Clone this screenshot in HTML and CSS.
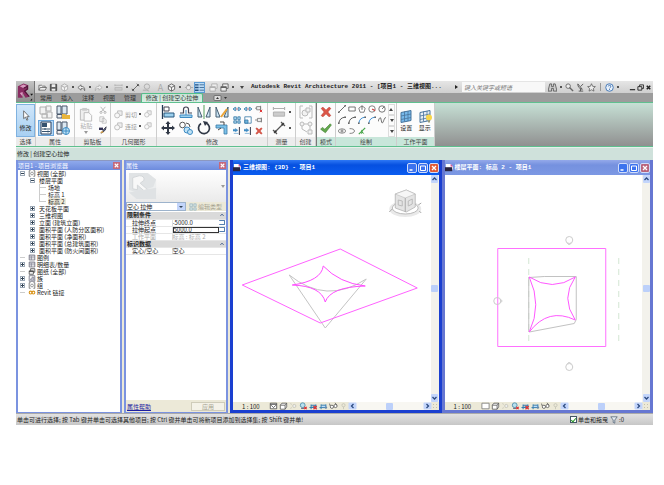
FILE: index.html
```html
<!DOCTYPE html>
<html lang="zh-CN">
<head>
<meta charset="utf-8">
<title>Autodesk Revit Architecture 2011</title>
<link rel="stylesheet" href="styles.css">
</head>
<body>
<svg class="sprite" aria-hidden="true">
  <symbol id="open" viewBox="0 0 10 10"><path d="M1 8V2.500h3l1 1h3V5M1 8l1.500-3H9.500L8 8z" fill="#eee" stroke="#555" stroke-width=".8"/></symbol>
  <symbol id="save" viewBox="0 0 10 10"><path d="M1.500 1.500h7v7h-7z" fill="#666" stroke="#444"/><path d="M3 1.500h4v3H3zM3 6.500h4v2H3z" fill="#eee"/></symbol>
  <symbol id="cube" viewBox="0 0 10 10"><path d="M5 1l3.500 2v4L5 9 1.500 7V3zM1.500 3L5 5l3.500-2M5 5v4" fill="#f2f2f2" stroke="currentColor" stroke-width=".9"/></symbol>
  <symbol id="undo" viewBox="0 0 10 10"><path d="M1 5l3.500-3v1.800C8 3.800 9 5.500 8.500 8.500 8 6.500 7 6 4.500 6.200V8z" fill="#eee" stroke="currentColor" stroke-width=".8"/></symbol>
  <symbol id="measure" viewBox="0 0 10 10"><path d="M1 2.500h8M1 1.500v2m8-2v2" fill="none" stroke="currentColor" stroke-width=".8"/><path d="M1 5h8v3H1z" fill="#ccc" stroke="#aaa" stroke-width=".6"/></symbol>
  <symbol id="dim" viewBox="0 0 14 14"><path d="M2 12L12 2M1 9l4 4M9 1l4 4" fill="none" stroke="#555" stroke-width="1.200"/><path d="M2 12l1-3 2 2zM12 2l-1 3-2-2z" fill="#333"/></symbol>
  <symbol id="tagr" viewBox="0 0 10 10"><circle cx="5.500" cy="4" r="3" fill="none" stroke="#aaa"/><path d="M1 8h4l3 1" fill="none" stroke="#aaa"/></symbol>
  <symbol id="section" viewBox="0 0 10 10"><circle cx="5" cy="5" r="2.500" fill="#eee" stroke="#aaa"/><path d="M5 1l1.500 2h-3zM1 5h2m4 0h3" fill="#999" stroke="#999" stroke-width=".7"/></symbol>
  <symbol id="thin" viewBox="0 0 10 10"><path d="M0 2h4M0 5h4M0 8h4" stroke="#234f80" stroke-width="1.500"/><path d="M5 2h5M5 5h5M5 8h5" stroke="#234f80" stroke-width=".8"/></symbol>
  <symbol id="wins" viewBox="0 0 10 10"><path d="M1 4h6v5H1zM3 4V1h6v5H7" fill="#eee" stroke="currentColor" stroke-width=".9"/><path d="M1 5h6" stroke="currentColor"/></symbol>
  <symbol id="props" viewBox="0 0 14 14"><path d="M1 2h6v7H1zM7 1h5v5H7zM3 9h5v4H3zM8 7h5v6H8z" fill="#f2f2f2" stroke="currentColor"/></symbol>
  <symbol id="typep" viewBox="0 0 14 14"><path d="M1 1h4v8H1zM6 1h5v8H6z" fill="#dce8f2" stroke="#48576a"/><path d="M1 9.500h5V13H1z" fill="#eee" stroke="#48576a"/></symbol>
  <symbol id="pal" viewBox="0 0 14 14"><path d="M2 1h10v12H2z" fill="#fff" stroke="#263d5a"/><path d="M3 2h5v4H3z" fill="#35526f"/><path d="M3 8h8M3 10.500h8M6 7v2m3 .5v2" stroke="#35526f"/></symbol>
  <symbol id="paste" viewBox="0 0 14 16"><path d="M1 2.500h9V14H1z" fill="#eee" stroke="#bbb"/><path d="M3 1h5v3H3z" fill="#ccc"/><path d="M5 6h5l3 3v6H5z" fill="#fafafa" stroke="#bbb"/></symbol>
  <symbol id="cut" viewBox="0 0 10 10"><path d="M2 1l5 6M8 1L3 7" stroke="#aaa"/><circle cx="2.500" cy="8" r="1.300" fill="none" stroke="#aaa"/><circle cx="7.500" cy="8" r="1.300" fill="none" stroke="#aaa"/></symbol>
  <symbol id="copy" viewBox="0 0 10 10"><path d="M1 1h5v6H1zM4 3h3l2 2v4H4z" fill="#f7f7f7" stroke="#bbb"/></symbol>
  <symbol id="brush" viewBox="0 0 10 10"><path d="M0 2h5v3H0z" fill="#335"/><path d="M3 9l3-5 3-3-1 4z" fill="#5a6b89" stroke="#334"/><path d="M1 9l3-3 2 2z" fill="#d5a34e"/></symbol>
  <symbol id="geo" viewBox="0 0 10 10"><path d="M4 1h5v5H4z" fill="#eee" stroke="#bbb"/><circle cx="3.500" cy="6" r="2.800" fill="#f8f8f8" stroke="#bbb"/></symbol>
  <symbol id="align" viewBox="0 0 14 14"><path d="M1.500 0v14" stroke="#223a55" stroke-width="1.300"/><path d="M3 2h5v4H3z" fill="#fff" stroke="#445"/><path d="M3 8h10v4H3z" fill="#9bd0ee" stroke="#28597e"/></symbol>
  <symbol id="offset" viewBox="0 0 14 14"><path d="M1 8h3.500V4.500a2.500 2.500 0 0 1 5 0V8H13" fill="none" stroke="#445" stroke-width="1.200"/><path d="M1 10h12v2.500H1z" fill="#9bd0ee" stroke="#3f8cc4"/><path d="M7 5v5" stroke="#3f8cc4"/></symbol>
  <symbol id="mirror" viewBox="0 0 14 14"><path d="M1 12V2l4 10zM13 12V2L9 12z" fill="#cce6f6" stroke="#445c70"/><path d="M7 0v14" stroke="#55a05a"/></symbol>
  <symbol id="mirror2" viewBox="0 0 14 14"><path d="M1 12V2l4 10zM13 12V2L9 12z" fill="#cce6f6" stroke="#445c70"/><path d="M6 12l6-8" stroke="#eaa437" stroke-width="2"/></symbol>
  <symbol id="move" viewBox="0 0 14 14"><path d="M7 0l2.500 3H8v3h3V4.500L14 7l-3 2.500V8H8v3h1.500L7 14l-2.500-3H6V8H3v1.500L0 7l3-2.500V6h3V3H4.500z" fill="#303846"/></symbol>
  <symbol id="copym" viewBox="0 0 14 14"><circle cx="3.500" cy="4" r="2.800" fill="#fff" stroke="#555"/><circle cx="8" cy="9" r="3" fill="#bfe2f5" stroke="#3f8cc4"/><circle cx="11" cy="11" r="2.500" fill="#bfe2f5" stroke="#3f8cc4"/><path d="M7 2q4 0 4 4" fill="none" stroke="#555"/></symbol>
  <symbol id="rotate" viewBox="0 0 14 14"><path d="M4 2.500A5.500 5.500 0 1 0 9 2" fill="none" stroke="#303846" stroke-width="1.700"/><path d="M6 0l5 1-3 4z" fill="#303846"/></symbol>
  <symbol id="trim" viewBox="0 0 14 14"><path d="M1 4h11v9H9V7H1z" fill="#7cc1e8" stroke="#3779a6" stroke-width=".8"/><path d="M5 1h4v3M3 9l3-2" fill="none" stroke="#444"/></symbol>
  <symbol id="split" viewBox="0 0 10 10"><path d="M0 5l2.500-2h1v4h-1zM10 5L7.500 3h-1v4h1z" fill="#9bd0ee" stroke="#3779a6"/><path d="M4 5h2" stroke="#d44"/></symbol>
  <symbol id="pin" viewBox="0 0 10 10"><path d="M2 2h5v4H2zM0 4h2M7 1v6" fill="#eee" stroke="#777"/><path d="M6 6l3 3m0-3L6 9" stroke="#d33" stroke-width="1.200"/></symbol>
  <symbol id="pin2" viewBox="0 0 10 10"><path d="M3 3h5v4H3zM0 5h3M8 2v6" fill="#eee" stroke="#777"/></symbol>
  <symbol id="array" viewBox="0 0 10 10"><path d="M1 1h3.500v3.500H1zM6 1h3v3.500H6zM1 6h3.500v3H1zM6 6h3v3H6z" fill="#a9d6ef" stroke="#3779a6"/></symbol>
  <symbol id="scale" viewBox="0 0 10 10"><path d="M1 1h8v8H1z" fill="#fff" stroke="#3779a6"/><path d="M1 5h4v4H1z" fill="#73b8df" stroke="#3779a6"/></symbol>
  <symbol id="extend" viewBox="0 0 10 10"><path d="M8 0v10" stroke="#334" stroke-width="1.200"/><path d="M0 3h3v-1l3 2-3 2V5H0zM1 8h6" fill="#3f8cc4" stroke="#3f8cc4" stroke-width=".7"/></symbol>
  <symbol id="x" viewBox="0 0 10 10"><path d="M1 2l1.500-1L5 3.500 7.500 1 9 2 6.500 5 9 8 7.500 9 5 6.500 2.500 9 1 8l2.500-3z" fill="#dc5648" stroke="#bb372c" stroke-width=".5"/></symbol>
  <symbol id="check" viewBox="0 0 10 10"><path d="M.5 6L2 4.500 4 6 8.500 1.500l1 1L4.500 9z" fill="#62a84d" stroke="#417e32" stroke-width=".5"/></symbol>
  <symbol id="create" viewBox="0 0 14 14"><path d="M4 1H1v12h3M10 1h3v12h-3" fill="none" stroke="#bbb"/><circle cx="6" cy="8" r="3" fill="#f2f2f2" stroke="#bbb"/><path d="M7 3h4v4H7z" fill="#f2f2f2" stroke="#bbb"/></symbol>
  <symbol id="create2" viewBox="0 0 14 14"><path d="M3 5v3l5 3M5 3h4M11 5v4" fill="none" stroke="#bbb"/><circle cx="3" cy="3" r="2" fill="#f2f2f2" stroke="#bbb"/><circle cx="11" cy="3" r="2" fill="#f2f2f2" stroke="#bbb"/><path d="M9 9h4v4H9z" fill="#f2f2f2" stroke="#bbb"/></symbol>
  <symbol id="line" viewBox="0 0 10 10"><path d="M1 9l8-8" stroke="#444"/><path d="M0 8h2v2H0zM8 0h2v2H8z" fill="#666"/></symbol>
  <symbol id="rect" viewBox="0 0 10 10"><path d="M1 2.500h8v5H1z" fill="#fff" stroke="#555"/></symbol>
  <symbol id="poly" viewBox="0 0 10 10"><path d="M5 1l4 3-1.500 5h-5L1 4z" fill="#fff" stroke="#666"/><path d="M5 1v5" stroke="#444"/></symbol>
  <symbol id="poly2" viewBox="0 0 10 10"><circle cx="5" cy="5" r="4" fill="#fff" stroke="#666"/><path d="M5 5l4 2" stroke="#c44" stroke-width="1.500"/></symbol>
  <symbol id="circ" viewBox="0 0 10 10"><circle cx="5" cy="5" r="4" fill="#fff" stroke="#555"/><path d="M5 5l3-3" stroke="#555"/></symbol>
  <symbol id="arc" viewBox="0 0 10 10"><path d="M1 9Q2 2 9 1.500" fill="none" stroke="currentColor" stroke-width="1.200"/><path d="M0 8h2v2H0zM8 .5h2v2H8z" fill="#666"/></symbol>
  <symbol id="spline" viewBox="0 0 10 10"><path d="M0 7Q3-2 4 5t3 1 3-3" fill="none" stroke="#555"/></symbol>
  <symbol id="ell" viewBox="0 0 10 10"><ellipse cx="5" cy="5" rx="4.500" ry="2.700" fill="#fff" stroke="#666"/><path d="M5 3v4M3 5h4" stroke="#666"/></symbol>
  <symbol id="pell" viewBox="0 0 10 10"><path d="M2 2q6 0 6 3t-6 3" fill="none" stroke="#666"/></symbol>
  <symbol id="pick" viewBox="0 0 10 10"><path d="M1 9L9 1" stroke="#46a548" stroke-width="1.500"/><path d="M4 3v6l1.500-1.500L8 9z" fill="#46a548"/></symbol>
  <symbol id="grid" viewBox="0 0 14 14"><path d="M2 3l10-2v10L2 13z" fill="currentColor" stroke="#47749c"/><path d="M2 6.500l10-2M2 10l10-2M5.500 2v10M9 1.500v10" stroke="#47749c" stroke-width=".8"/></symbol>
  <symbol id="view" viewBox="0 0 10 10"><path d="M3 1H1v8h2M7 1h2v8H7" fill="none" stroke="#555"/><circle cx="5" cy="5" r="2" fill="none" stroke="#777"/></symbol>
  <symbol id="sheet" viewBox="0 0 10 10"><path d="M1 1.500h8v7H1z" fill="#fff" stroke="#556"/><path d="M1 3h8M4 3v5.500M1 5.500h8" stroke="#778"/></symbol>
  <symbol id="fam" viewBox="0 0 10 10"><path d="M1 1h8v8H1z" fill="#fff" stroke="#556"/><path d="M3 5.500h2V3h2.500v4.500H3z" fill="#ccd" stroke="#667" stroke-width=".8"/></symbol>
  <symbol id="link" viewBox="0 0 10 10"><circle cx="3" cy="5" r="2" fill="none" stroke="#d99318" stroke-width="1.500"/><circle cx="7" cy="5" r="2" fill="none" stroke="#d99318" stroke-width="1.500"/></symbol>
  <symbol id="detail" viewBox="0 0 10 10"><path d="M1 1.500h8v7H1z" fill="#fff" stroke="#444"/><path d="M1 3h8M2 4l3 3 3-3" fill="none" stroke="#444"/></symbol>
  <symbol id="box" viewBox="0 0 10 10"><path d="M.5 1.500h9v7h-9z" fill="#fff" stroke="#777"/></symbol>
  <symbol id="solid" viewBox="0 0 10 10"><path d="M1 4l2-2.500h6V6L7 9H1zM1 4h6v5M7 4l2-2.500" fill="#fff" stroke="#555"/></symbol>
  <symbol id="sun" viewBox="0 0 10 10"><circle cx="6" cy="5" r="2" fill="#eee" stroke="#c3c3b5"/><path d="M1 2l2 1M1 8l2-1" stroke="#c3c3b5"/></symbol>
  <symbol id="shade" viewBox="0 0 10 10"><circle cx="4" cy="4" r="3" fill="#b8e0ee" stroke="#4488a8"/><path d="M2 8h4" stroke="#446"/><path d="M6 6l3 3m0-3L6 9" stroke="#d33" stroke-width="1.500"/></symbol>
  <symbol id="crop" viewBox="0 0 10 10"><path d="M0 7h8V3M2 3v6M2 4h6" fill="#9cd" stroke="#357db0" stroke-width="1.300"/><path d="M5 5l4 4m0-4L5 9" stroke="#d33" stroke-width="1.600"/></symbol>
  <symbol id="crop2" viewBox="0 0 10 10"><path d="M0 7h8V3M2 3v6M2 4h6" fill="#bdf" stroke="#357db0" stroke-width="1.200"/><circle cx="8" cy="7" r="1.500" fill="#68a"/></symbol>
  <symbol id="glasses" viewBox="0 0 10 10"><circle cx="3" cy="6" r="2" fill="#fff" stroke="#555"/><circle cx="7.500" cy="5" r="2" fill="#fff" stroke="#555"/><path d="M1 5L0 2M9 4l-2-3" stroke="#555"/></symbol>
  <symbol id="bulb" viewBox="0 0 10 10"><circle cx="5" cy="4" r="2" fill="none" stroke="#c3c3b5"/><path d="M5 6v3" stroke="#c3c3b5"/></symbol>
  <symbol id="doc" viewBox="0 0 10 10"><path d="M1 0h6l3 3v4H1z" fill="#fff"/><path d="M0 4h9v5H0z" fill="#2a2440"/><path d="M7 0l3 3H7z" fill="#d48"/></symbol>
  <symbol id="binoc" viewBox="0 0 10 10"><path d="M2 1h2v3h2V1h2l2 8H6V6H4v3H0z" fill="#ccc" stroke="#444" stroke-width=".8"/></symbol>
  <symbol id="key" viewBox="0 0 10 10"><circle cx="3.500" cy="3.500" r="2.500" fill="#eee" stroke="#666"/><path d="M5 5l4 4" stroke="#666" stroke-width="1.500"/></symbol>
  <symbol id="dish" viewBox="0 0 10 10"><path d="M2 1q0 5 5 6zM3 9h5M5 6v3M5 4l3-3" fill="#eee" stroke="#555"/></symbol>
  <symbol id="star" viewBox="0 0 10 10"><path d="M5 .8l1.300 2.900 3 .3-2.200 2 .6 3L5 7.500 2.300 9l.6-3L.7 4l3-.3z" fill="#eee" stroke="#555" stroke-width=".8"/></symbol>
  <symbol id="help" viewBox="0 0 10 10"><circle cx="5" cy="5" r="4.200" fill="#e8f1fb" stroke="#3c73b4"/><path d="M3.700 3.800q.2-1.300 1.400-1.300T6.400 3.700 5 5.800M5 6.800v1" fill="none" stroke="#2a5ea0" stroke-width=".9"/></symbol>
  <symbol id="up" viewBox="0 0 7 8"><path d="M1.500 5L3.500 3l2 2" fill="none" stroke="#2c4a80" stroke-width="1.300"/></symbol>
</svg>

<div class="app">
  <header class="head">
    <button class="logo" aria-label="应用程序菜单">
      <svg viewBox="0 0 19 21"><path d="M2 17V5l6-3 5 2v4l-3 2 4 6-4 1-3-5v5z" fill="#8a2d62"/><path d="M4 5l4-2 4 2-4 2zM4 12l3-1v5z" fill="#d99ac0"/><path d="M8 7l4-2v3l-3 2 5 6" fill="none" stroke="#4e1437" stroke-width="1.200"/><path d="M15 13h3l-1.500 2z" fill="#111"/><path d="M15 20l2-2v2z" fill="#111"/></svg>
    </button>
    <div class="headmain">
      <div class="titlebar">
        <button class="q" aria-label="打开"><svg><use href="#open"/></svg></button>
        <button class="q" aria-label="保存"><svg><use href="#save"/></svg></button>
        <button class="q off" aria-label="同步"><svg><use href="#cube"/></svg></button><i class="dot"></i>
        <button class="q" aria-label="放弃"><svg><use href="#undo"/></svg></button><i class="dot"></i>
        <button class="q off flip" aria-label="重做"><svg><use href="#undo"/></svg></button><i class="dot"></i><i class="sp"></i>
        <button class="q off" aria-label="测量"><svg><use href="#measure"/></svg></button><i class="dot"></i>
        <button class="q" aria-label="对齐尺寸标注"><svg><use href="#dim"/></svg></button>
        <button class="q" aria-label="标记"><svg><use href="#tagr"/></svg></button><i class="sp"></i>
        <button class="q off" aria-label="文字">A</button>
        <button class="q" aria-label="三维视图"><svg><use href="#cube"/></svg></button><i class="dot"></i>
        <button class="q" aria-label="剖面"><svg><use href="#section"/></svg></button>
        <button class="q on" aria-label="细线"><svg><use href="#thin"/></svg></button><i class="sp"></i>
        <button class="q off" aria-label="关闭隐藏窗口"><svg><use href="#wins"/></svg></button>
        <button class="q" aria-label="切换窗口"><svg><use href="#wins"/></svg></button><i class="dot"></i>
        <button class="q" aria-label="自定义"><i class="tri"></i></button>
        <h1 class="apptitle">Autodesk Revit Architecture 2011 - [项目1 - 三维视图...</h1>
        <i class="tri side"></i>
        <input class="search" type="text" aria-label="搜索" placeholder="键入关键字或短语">
        <button class="q" aria-label="查找"><svg><use href="#binoc"/></svg></button><i class="dot"></i>
        <button class="q" aria-label="速博中心"><svg><use href="#key"/></svg></button>
        <button class="q" aria-label="通讯中心"><svg><use href="#dish"/></svg></button>
        <button class="q" aria-label="收藏夹"><svg><use href="#star"/></svg></button>
        <i class="bar"></i>
        <button class="q" aria-label="帮助"><svg><use href="#help"/></svg></button><i class="dot"></i>
        <span class="winbtns">
          <button aria-label="最小化"><svg viewBox="0 0 8 8"><path d="M1 6.500h6" stroke="#222" stroke-width="1.300"/></svg></button>
          <button aria-label="还原"><svg viewBox="0 0 8 8"><path d="M1 3h4.500v4H1zM3 3V1h4.500v4h-2" fill="none" stroke="#222"/></svg></button>
          <button aria-label="关闭"><svg viewBox="0 0 8 8"><path d="M2 2l4 4M6 2L2 6" stroke="#222" stroke-width="1.700"/></svg></button>
        </span>
      </div>
      <nav class="tabs">
        <a href="#">常用</a><a href="#">插入</a><a href="#">注释</a><a href="#">视图</a><a href="#">管理</a><a href="#" class="active">修改 | 创建空心拉伸</a>
        <button class="ribtoggle" aria-label="最小化功能区"><svg viewBox="0 0 14 6"><rect x="1" y=".5" width="7" height="5" rx="1" fill="#ddd" stroke="#555" stroke-width=".7"/><path d="M3 4l1.500-2L6 4zM11 2h3l-1.500 2z" fill="#333"/></svg></button>
      </nav>
    </div>
  </header>

  <div class="ribbon">
    <section class="panel p-sel"><div class="body"><button class="modify"><svg viewBox="0 0 10 14"><path d="M2 1v10l2.500-2L6 13l1.500-.7L6 8.500h3z" fill="#fff" stroke="#555"/></svg>修改</button></div><h2>选择</h2></section>
    <section class="panel p-prop"><div class="body g2">
      <button class="b off" aria-label="族类别"><svg><use href="#props"/></svg></button>
      <button class="b" aria-label="族类型"><svg viewBox="0 0 14 14"><use href="#typep"/><path d="M6 9h3l1 1h4v4H6z" fill="#e9b53c"/></svg></button>
      <button class="b on" aria-label="属性"><svg><use href="#pal"/></svg></button>
      <button class="b" aria-label="类型属性"><svg viewBox="0 0 14 14"><use href="#typep"/><circle cx="10" cy="10" r="3.500" fill="#bfe2f5" stroke="#3f8cc4"/><path d="M6.500 10h7M10 6.500v7" stroke="#3f8cc4"/></svg></button>
    </div><h2>属性</h2></section>
    <section class="panel p-clip"><div class="body clip">
      <button class="big off"><svg><use href="#paste"/></svg>粘贴<i class="tri"></i></button>
      <div class="col"><button class="s" aria-label="剪切到剪贴板"><svg><use href="#cut"/></svg></button><button class="s" aria-label="复制到剪贴板"><svg><use href="#copy"/></svg></button><button class="s" aria-label="匹配类型"><svg><use href="#brush"/></svg></button></div>
    </div><h2>剪贴板</h2></section>
    <section class="panel p-geo"><div class="body rows">
      <div class="row"><button class="cmd"><svg><use href="#geo"/></svg>剪切</button><i class="dot"></i><button class="s" aria-label="拆分面"><svg><use href="#geo"/></svg></button></div>
      <div class="row"><button class="cmd"><svg><use href="#geo"/></svg>连接</button><i class="dot"></i><button class="s" aria-label="填色"><svg><use href="#geo"/></svg></button></div>
    </div><h2>几何图形</h2></section>
    <section class="panel p-mod"><div class="body mod">
      <div class="g4">
        <button class="b" aria-label="对齐"><svg><use href="#align"/></svg></button><button class="b" aria-label="偏移"><svg><use href="#offset"/></svg></button><button class="b" aria-label="镜像拾取轴"><svg><use href="#mirror"/></svg></button><button class="b" aria-label="镜像绘制轴"><svg><use href="#mirror2"/></svg></button>
        <button class="b" aria-label="移动"><svg><use href="#move"/></svg></button><button class="b" aria-label="复制"><svg><use href="#copym"/></svg></button><button class="b" aria-label="旋转"><svg><use href="#rotate"/></svg></button><button class="b" aria-label="修剪"><svg><use href="#trim"/></svg></button>
      </div>
      <div class="g3">
        <button class="s" aria-label="拆分图元"><svg><use href="#split"/></svg></button><button class="s" aria-label="间隙拆分"><svg><use href="#split"/></svg></button><button class="s" aria-label="解锁"><svg><use href="#pin"/></svg></button>
        <button class="s" aria-label="阵列"><svg><use href="#array"/></svg></button><button class="s" aria-label="缩放"><svg><use href="#scale"/></svg></button><button class="s" aria-label="锁定"><svg><use href="#pin2"/></svg></button>
        <button class="s" aria-label="修剪单个"><svg><use href="#extend"/></svg></button><button class="s" aria-label="修剪多个"><svg><use href="#extend"/></svg></button><button class="s" aria-label="删除"><svg><use href="#x"/></svg></button>
      </div>
    </div><h2>修改</h2></section>
    <section class="panel p-mea"><div class="body rows">
      <div class="row"><button class="b off" aria-label="测量距离"><svg><use href="#measure"/></svg></button><i class="dot"></i></div>
      <div class="row"><button class="b" aria-label="尺寸标注"><svg><use href="#dim"/></svg></button><i class="dot"></i></div>
    </div><h2>测量</h2></section>
    <section class="panel p-one"><div class="body rows"><button class="b" aria-label="创建组"><svg><use href="#create"/></svg></button><button class="b" aria-label="创建类似"><svg><use href="#create2"/></svg></button></div><h2>创建</h2></section>
    <section class="panel ctx p-one first"><div class="body rows"><button class="b mid" aria-label="取消"><svg><use href="#x"/></svg></button><button class="b mid" aria-label="完成"><svg><use href="#check"/></svg></button></div><h2>模式</h2></section>
    <section class="panel ctx p-draw"><div class="body mod">
      <div class="g5">
        <button class="s" aria-label="直线"><svg><use href="#line"/></svg></button><button class="s" aria-label="矩形"><svg><use href="#rect"/></svg></button><button class="s" aria-label="内接多边形"><svg><use href="#poly"/></svg></button><button class="s" aria-label="外接多边形"><svg><use href="#poly2"/></svg></button><button class="s" aria-label="圆形"><svg><use href="#circ"/></svg></button>
        <button class="s" aria-label="起点终点弧"><svg><use href="#arc"/></svg></button><button class="s" aria-label="圆心弧"><svg><use href="#arc"/></svg></button><button class="s blue" aria-label="相切弧"><svg><use href="#arc"/></svg></button><button class="s blue" aria-label="圆角弧"><svg><use href="#arc"/></svg></button><button class="s" aria-label="样条曲线"><svg><use href="#spline"/></svg></button>
        <button class="s" aria-label="椭圆"><svg><use href="#ell"/></svg></button><button class="s" aria-label="半椭圆"><svg><use href="#pell"/></svg></button><button class="s" aria-label="拾取线"><svg><use href="#pick"/></svg></button>
      </div>
      <div class="gal"><button class="dn" aria-label="上"><i class="tri"></i></button><button aria-label="下"><i class="tri"></i></button><button aria-label="更多"><i class="tri"></i></button></div>
    </div><h2>绘制</h2></section>
    <section class="panel ctx p-wp"><div class="body wp">
      <button class="big"><svg class="blue2"><use href="#grid"/></svg>设置</button>
      <button class="big"><svg class="pale" viewBox="0 0 14 14"><use href="#grid"/><circle cx="11" cy="8" r="3" fill="#f7d64a"/><path d="M10 11h2v2h-2z" fill="#997"/></svg>显示</button>
    </div><h2>工作平面</h2></section>
  </div>

  <div class="options">修改 | 创建空心拉伸</div>

  <main class="work">
    <aside class="dock browser">
      <div class="docktitle"><span>项目1 - 项目浏览器</span><button class="close" aria-label="关闭"><svg viewBox="0 0 8 8"><path d="M2 2l4 4M6 2L2 6" stroke="#fff" stroke-width="1.300"/></svg></button></div>
      <ul class="tree">
        <li><div><i class="ex"></i><svg><use href="#view"/></svg>视图 (全部)</div>
          <ul>
            <li><div><i class="ex"></i>楼层平面</div>
              <ul><li><div>场地</div></li><li><div>标高 1</div></li><li><div><b>标高 2</b></div></li></ul></li>
            <li><div><i class="ex plus"></i>天花板平面</div></li>
            <li><div><i class="ex plus"></i>三维视图</div></li>
            <li><div><i class="ex plus"></i>立面 (建筑立面)</div></li>
            <li><div><i class="ex plus"></i>面积平面 (人防分区面积)</div></li>
            <li><div><i class="ex plus"></i>面积平面 (净面积)</div></li>
            <li><div><i class="ex plus"></i>面积平面 (总建筑面积)</div></li>
            <li><div><i class="ex plus"></i>面积平面 (防火间面积)</div></li>
          </ul></li>
        <li><div><i class="ex none"></i><svg><use href="#sheet"/></svg>图例</div></li>
        <li><div><i class="ex plus"></i><svg><use href="#sheet"/></svg>明细表/数量</div></li>
        <li><div><i class="ex none"></i><svg><use href="#wins"/></svg>图纸 (全部)</div></li>
        <li><div><i class="ex plus"></i><svg><use href="#fam"/></svg>族</div></li>
        <li><div><i class="ex plus"></i><svg><use href="#view"/></svg>组</div></li>
        <li><div><i class="ex none"></i><svg><use href="#link"/></svg>Revit 链接</div></li>
      </ul>
    </aside>

    <aside class="dock props">
      <div class="docktitle"><span>属性</span><button class="close" aria-label="关闭"><svg viewBox="0 0 8 8"><path d="M2 2l4 4M6 2L2 6" stroke="#fff" stroke-width="1.300"/></svg></button></div>
      <div class="preview">
        <svg viewBox="0 0 32 30"><path d="M1 1h20l9 7v21H9L1 22z" fill="#eceeef"/><path d="M1 1h20l9 7-3 8-18 6-8-3z" fill="#e0e3e5"/><path d="M5 18V6l7-2q6 0 5 5l-4 3 8 7-4 1-7-6v5z" fill="#f8f8f8" stroke="#d2d5d7"/><path d="M1 22l29-5v12H9z" fill="#dfe2e4"/></svg>
        <i class="tri"></i>
      </div>
      <div class="typerow">
        <label class="selwrap"><select aria-label="类型选择器"><option>空心 拉伸</option></select><span class="chev"></span></label>
        <button class="edit" disabled><svg><use href="#array"/></svg>编辑类型</button>
      </div>
      <table>
        <colgroup><col class="c1"><col><col class="c3"></colgroup>
        <tbody>
          <tr><th colspan="3"><div class="grp">限制条件<svg><use href="#up"/></svg></div></th></tr>
          <tr><td><label for="end">拉伸终点</label></td><td><input id="end" type="text" value="-5000.0"></td><td><button class="assoc" aria-label="关联参数"></button></td></tr>
          <tr><td><label for="start">拉伸起点</label></td><td><input id="start" class="focus" type="text" value="5000.0"></td><td><button class="assoc" aria-label="关联参数"></button></td></tr>
          <tr class="dis"><td>工作平面</td><td>标高 : 标高 2</td><td></td></tr>
          <tr><th colspan="3"><div class="grp">标识数据<svg><use href="#up"/></svg></div></th></tr>
          <tr><td>实心/空心</td><td>空心</td><td></td></tr>
        </tbody>
      </table>
      <div class="propfoot"><a href="#">属性帮助</a><button disabled>应用</button></div>
    </aside>

    <div class="mdi">
      <section class="win front">
        <div class="wintitle"><svg><use href="#doc"/></svg><span>三维视图: {3D} - 项目1</span>
          <button aria-label="最小化"><svg viewBox="0 0 8 8"><path d="M1.500 6h3" stroke="#fff" stroke-width="1.500"/></svg></button><button aria-label="最大化"><svg viewBox="0 0 8 8"><path d="M1.500 2h5v4.500h-5z" fill="none" stroke="#fff"/></svg></button><button class="wx" aria-label="关闭"><svg viewBox="0 0 8 8"><path d="M2 2l4 4M6 2L2 6" stroke="#fff" stroke-width="1.300"/></svg></button></div>
        <div class="client">
          <svg class="canvas" viewBox="0 0 197 227" preserveAspectRatio="xMidYMin meet">
            <g fill="none">
              <path d="M56 100Q93 130 133 104L92 153z" stroke="#c4c4c4"/>
              <path d="M107 74L9 110 87 148 184 113z" stroke="#ff62ff"/>
              <path d="M90 91Q88 106 59 110Q88 111 92 127Q97 112 132 111Q106 108 90 91z" stroke="#ff4cff"/>
            </g>
            <ellipse cx="172" cy="34" rx="16" ry="8" fill="#e9e9e9"/>
            <ellipse cx="172" cy="33" rx="13" ry="6" fill="#fff" stroke="#bbb"/>
            <path d="M162 19l11-4 9 4v13l-9 5-11-4z" fill="#e4e4e4" stroke="#aaa" stroke-width=".7"/>
            <path d="M162 19l11-4 9 4-10 4z" fill="#f6f6f6" stroke="#bbb" stroke-width=".6"/>
            <path d="M172 23v14" stroke="#aaa"/><path d="M165 25l4 1v5l-4-1zM175 26l4-2v5l-4 2z" fill="none" stroke="#bbb"/>
            <path d="M156 37l3-3M185 30l3-2M186 36l2 2" stroke="#aaa"/>
          </svg>
          <div class="vs"><button aria-label="向上"><svg><use href="#up"/></svg></button><i></i><button class="dn" aria-label="向下"><svg><use href="#up"/></svg></button></div>
        </div>
        <div class="vbar"><span class="scale">1 : 100</span>
          <svg><use href="#detail"/></svg><svg><use href="#solid"/></svg><svg><use href="#sun"/></svg><svg><use href="#shade"/></svg><svg><use href="#crop"/></svg><svg><use href="#crop2"/></svg><svg><use href="#glasses"/></svg><svg><use href="#bulb"/></svg>
          <div class="hs"><button class="lf" aria-label="向左"><svg><use href="#up"/></svg></button><i></i><button class="rt" aria-label="向右"><svg><use href="#up"/></svg></button></div><span class="grip"></span></div>
      </section>
      <section class="win back">
        <div class="wintitle"><svg><use href="#doc"/></svg><span>楼层平面: 标高 2 - 项目1</span>
          <button aria-label="最小化"><svg viewBox="0 0 8 8"><path d="M1.500 6h3" stroke="#fff" stroke-width="1.500"/></svg></button><button aria-label="最大化"><svg viewBox="0 0 8 8"><path d="M1.500 2h5v4.500h-5z" fill="none" stroke="#fff"/></svg></button><button class="wx" aria-label="关闭"><svg viewBox="0 0 8 8"><path d="M2 2l4 4M6 2L2 6" stroke="#fff" stroke-width="1.300"/></svg></button></div>
        <div class="client">
          <svg class="canvas" viewBox="1 0 197 227" preserveAspectRatio="xMidYMin meet">
            <g fill="none">
              <path d="M84.500 83v85M174.500 83v85" stroke="#d3e6d3" stroke-dasharray="6 5"/>
              <path d="M84.500 102v55M85 102.500l15-1h32v43l-2 4L85 157" stroke="#c2c2c2"/>
              <path d="M53.500 73.500h108v98h-108z" stroke="#ff70ff"/>
              <path d="M85 102Q108 117 131 102Q116 123 131 145Q104 132 85 157Q98 130 85 102z" stroke="#ff58ff"/>
              <circle cx="125" cy="65" r="3.500" stroke="#ccc"/><path d="M123 68l2 2 2-2" stroke="#ccc"/>
              <circle cx="125" cy="192" r="3.500" stroke="#ccc"/><path d="M123 189l2-2 2 2" stroke="#ccc"/>
              <circle cx="53" cy="126" r="3.500" stroke="#ccc"/><path d="M56 124l2 2-2 2" stroke="#ccc"/>
            </g>
          </svg>
          <div class="vs"><button aria-label="向上"><svg><use href="#up"/></svg></button><i></i><button class="dn" aria-label="向下"><svg><use href="#up"/></svg></button></div>
        </div>
        <div class="vbar"><span class="scale">1 : 100</span>
          <svg><use href="#box"/></svg><svg><use href="#solid"/></svg><svg><use href="#sun"/></svg><svg><use href="#shade"/></svg><svg><use href="#crop"/></svg><svg><use href="#crop2"/></svg><svg><use href="#glasses"/></svg><svg><use href="#bulb"/></svg>
          <div class="hs"><button class="lf" aria-label="向左"><svg><use href="#up"/></svg></button><i></i><button class="rt" aria-label="向右"><svg><use href="#up"/></svg></button></div><span class="grip"></span></div>
      </section>
    </div>
  </main>

  <footer class="status">
    <span class="msg">单击可进行选择; 按 Tab 键并单击可选择其他项目; 按 Ctrl 键并单击可将新项目添加到选择集; 按 Shift 键并单!</span>
    <label><input type="checkbox" checked>单击和拖曳</label>
    <svg viewBox="0 0 10 10"><path d="M1 1h8L6 5v4L4 8V5z" fill="#e8eef4" stroke="#567"/></svg><span>:0</span>
  </footer>
</div>
</body>
</html>
```
FILE: styles.css
```css
* { box-sizing: border-box; }
body {
  margin: 0;
  padding: 81px 11px 60px 16px;
  height: 100vh;
  background: #fff;
  font: 6px/7px "Noto Sans CJK SC", "Liberation Sans", sans-serif;
  color: #222;
}
button, input, select { font: inherit; color: inherit; margin: 0; padding: 0; border: 0; background: none; }
h1, h2, ul { margin: 0; padding: 0; font: inherit; }
a { color: inherit; text-decoration: none; }
i { font-style: normal; }
svg { display: block; }
.sprite { position: absolute; width: 0; height: 0; }
.app { display: flex; flex-direction: column; height: 100%; }
.off { color: #b0b0b0; }
.tri { flex: none; width: 0; height: 0; border: 2px solid transparent; border-top: 3px solid #444; border-bottom: 0; }
.tri.side { border: 2px solid transparent; border-left: 3px solid #222; border-right: 0; margin-right: 4px; }
.off .tri, .preview .tri { border-top-color: #999; }
.dn { transform: rotate(180deg); }
.lf { transform: rotate(-90deg); }
.rt { transform: rotate(90deg); }

/* header */
.head { display: flex; background: linear-gradient(#e6e6e6, #cfcfcf 12px, #9c9c9c 12px); }
.logo { width: 19px; height: 21px; background: linear-gradient(#c4c4c4, #8c8c8c); border-right: 1px solid #777; }
.logo svg { width: 18px; height: 21px; }
.headmain { flex: 1; min-width: 0; padding-left: 2px; }
.titlebar { display: flex; align-items: center; height: 12px; }
.q { flex: none; width: 11px; height: 11px; display: grid; place-items: center; font-size: 9px; color: #555; }
.q.off { color: #aaa; }
.q svg { width: 9px; height: 9px; }
.q.on { background: #b9daf5; border: 1px solid #5a9bd5; }
.flip svg { transform: scaleX(-1); }
.dot { flex: none; width: 6px; height: 2px; background: radial-gradient(circle, #555 1px, transparent 1px); }
.sp { flex: none; width: 3px; }
.apptitle { flex: 1; min-width: 0; padding-left: 4px; font: bold 6px/10px "Liberation Mono", "Noto Sans CJK SC", monospace; white-space: nowrap; overflow: hidden; color: #222; }
.search { width: 83px; height: 10px; padding-left: 2px; background: #f8f8f8; font-style: italic; margin-right: 2px; }
.search::placeholder { color: #777; opacity: 1; }
.bar { width: 1px; height: 8px; margin: 0 3px; background: #999; }
.winbtns { display: flex; padding-left: 8px; }
.winbtns button { width: 8px; }
.winbtns svg { width: 7px; height: 7px; }
.tabs { display: flex; gap: 1px; height: 9px; line-height: 9px; margin-left: -1px; }
.tabs a { width: 20px; text-align: center; color: #333; }
.tabs .active { width: 62px; background: linear-gradient(#c8e2d6, #d9efe5); border: 1px solid #53bf88; border-bottom: 0; border-radius: 2px 2px 0 0; line-height: 8px; white-space: nowrap; }
.ribtoggle svg { width: 16px; height: 6px; margin-left: 8px; }

/* ribbon */
.ribbon { display: flex; height: 45px; border: solid #5fc08f; border-width: 1px 0; background: linear-gradient(#c6e0d5, #909090); }
.panel { display: flex; flex-direction: column; flex: none; background: #fcfcfc; border-right: 1px solid #cdcdcd; }
.panel h2 { height: 9px; line-height: 9px; text-align: center; background: #ececec; color: #444; }
.panel.ctx h2 { background: #c8e6da; }
.panel .body { flex: 1; min-height: 0; }
.first { border-left: 1px solid #777; }
.p-sel { width: 20px; }
.p-prop { width: 39px; }
.p-clip { width: 36px; }
.p-geo { width: 46px; }
.p-mod { width: 111px; }
.p-mea { width: 28px; }
.p-one { width: 20px; }
.p-draw { width: 61px; }
.p-wp { width: 38px; }
.modify { width: 100%; height: 33px; margin-top: 1px; background: linear-gradient(#cfe6fa, #a9d0f2); border: 1px solid #7fb2e0; white-space: nowrap; }
.modify svg { width: 8px; height: 11px; margin: 0 auto 3px; }
.b { display: grid; place-items: center; width: 16px; height: 16px; }
.b svg { width: 14px; height: 14px; }
.b.mid svg { width: 12px; height: 12px; }
.b.on { background: #b4d7f5; border: 1px solid #6aa5da; }
.s { display: grid; place-items: center; width: 10px; height: 10px; color: #555; }
.s svg { width: 8px; height: 8px; }
.s.blue { color: #3a8bd0; }
.g2 { display: grid; grid-template-columns: 17px 17px; place-content: center; }
.clip, .mod, .wp { display: flex; align-items: center; justify-content: space-evenly; }
.big { display: flex; flex-direction: column; align-items: center; width: 18px; white-space: nowrap; }
.big svg { width: 14px; height: 15px; }
.big .tri { margin-top: 2px; }
.blue2 { color: #76b8ea; }
.pale { color: #e8eef4; }
.rows { display: flex; flex-direction: column; align-items: center; justify-content: center; }
.row { display: flex; align-items: center; }
.cmd { display: flex; align-items: center; gap: 2px; height: 12px; color: #999; }
.cmd svg { width: 9px; height: 9px; }
.g4 { display: grid; grid-template-columns: repeat(4, 18px); justify-items: center; }
.g3 { display: grid; grid-template-columns: repeat(3, 11px); row-gap: 1px; }
.g5 { display: grid; grid-template-columns: repeat(5, 10px); row-gap: 1px; }
.gal { display: flex; flex-direction: column; }
.gal button { display: grid; place-items: center; width: 7px; height: 11px; border: 1px solid #ddd; }

.options { height: 13px; line-height: 12px; padding-left: 1px; background: #cfe1db; border-top: 1px solid #e6f0ea; }

/* docked palettes */
.work { flex: 1; min-height: 0; display: flex; background: #ece9d8; }
.dock { display: flex; flex-direction: column; background: #fff; border: solid #7b93e0; border-width: 0 2px 1px; }
.browser { width: 106px; margin-right: 2px; }
.props { width: 104px; margin-right: 2px; }
.docktitle { display: flex; justify-content: space-between; align-items: center; height: 10px; color: #f4f7ff; background: linear-gradient(#8fa9ec, #6d8bdd); border-top: 1px solid #8c98c0; }
.close { width: 7px; height: 7px; background: #c4697c; }
.close svg { width: 7px; height: 7px; }
.tree, .tree ul { list-style: none; }
.tree { padding: 0 0 0 1px; }
.tree div { display: flex; align-items: center; height: 7px; white-space: nowrap; }
.tree svg { width: 8px; height: 7px; margin: 0 1px 0 3px; }
.tree ul { padding-left: 10px; }
.tree ul ul { padding-left: 19px; background: linear-gradient(#ccc, #ccc) 10px 0 / 1px 18px no-repeat; }
.tree ul .ex { margin-right: 4px; }
.tree ul ul div::before { content: ""; width: 7px; height: 1px; margin: 0 2px 0 -9px; background: #ccc; }
.tree b { font-weight: normal; background: #ece9d8; padding-right: 1px; }
.ex { flex: none; width: 5px; height: 5px; margin-left: 1px; border: 1px solid #9aa7b5; background: linear-gradient(#345, #345) 0 1px / 3px 1px no-repeat; }
.ex.plus { background: linear-gradient(#345, #345) 0 1px / 3px 1px no-repeat, linear-gradient(#345, #345) 1px 0 / 1px 3px no-repeat; }
.ex.none { border: 0; background: #ccc; height: 1px; }
.preview { display: flex; justify-content: space-between; align-items: center; height: 32px; padding: 0 1px; background: linear-gradient(#fff, #eaeaea); }
.preview svg { width: 32px; height: 28px; }
.typerow { display: flex; align-items: center; gap: 3px; height: 9px; background: #ece9d8; }
.selwrap { display: flex; align-items: center; width: 60px; height: 9px; background: #fff; border: 1px solid #9db3cc; }
.selwrap select { flex: 1; min-width: 0; appearance: none; height: 7px; }
.chev { width: 8px; height: 7px; background: #c3d5fb; display: grid; place-items: center; }
.chev::after { content: ""; border: 2px solid transparent; border-top-color: #345; border-bottom: 0; }
.edit { display: flex; align-items: center; gap: 1px; color: #a5a290; white-space: nowrap; }
.edit svg { width: 8px; height: 8px; opacity: .4; }
table { width: 100%; margin-top: 1px; border-collapse: collapse; table-layout: fixed; }
.c1 { width: 46px; }
.c3 { width: 7px; }
th, td { height: 7px; padding: 0; line-height: 6px; font-weight: normal; text-align: left; border-bottom: 1px solid #e6e6e6; white-space: nowrap; }
th { background: #dadada; }
.grp { display: flex; justify-content: space-between; padding: 0 1px; font-weight: bold; }
.grp svg { width: 6px; height: 6px; }
td:first-child { padding-left: 6px; }
td:nth-child(2) { border-left: 1px solid #ddd; }
td input { display: block; width: 100%; height: 6px; }
td input.focus { outline: 1px solid #333; outline-offset: -1px; padding-left: 1px; }
.assoc { display: block; width: 6px; height: 5px; border: 1px solid #557fb0; border-left: 0; border-radius: 1px; }
.dis { color: #aaa; }
.propfoot { display: flex; align-items: center; justify-content: space-between; height: 12px; margin-top: auto; padding: 0 1px; background: #ece9d8; }
.propfoot a { color: #1d1da0; text-decoration: underline; }
.propfoot button { width: 34px; height: 9px; border: 1px solid #cfccba; background: #f4f2e8; color: #a5a290; }

/* view windows */
.mdi { flex: 1; min-width: 0; display: flex; }
.win { flex: 1; min-width: 0; display: flex; flex-direction: column; border: solid; border-width: 0 3px 3px; }
.front { border-color: #1a3fd0; }
.back { border-color: #6677d2; }
.wintitle { display: flex; align-items: center; gap: 1px; height: 15px; padding-top: 1px; color: #fff; font: bold 6px/10px "Liberation Mono", "Noto Sans CJK SC", monospace; background: linear-gradient(#2e78f5, #0650e0 5px, #0a5cf0); }
.back .wintitle { background: linear-gradient(#94a9ea, #7591df 5px, #7c98e4); }
.wintitle > svg { width: 8px; height: 8px; }
.wintitle span { flex: 1; padding-left: 1px; white-space: nowrap; }
.wintitle button { width: 10px; height: 10px; border: 1px solid #cfdcfa; border-radius: 2px; background: #3c73ee; }
.wintitle button svg { width: 8px; height: 8px; }
.wintitle .wx { background: #e25a34; }
.back .wx { background: #b9657c; }
.client { flex: 1; min-height: 0; display: flex; background: #fff; }
.canvas { flex: 1; min-width: 0; width: 0; height: 100%; }
.vs { display: flex; flex-direction: column; align-items: center; justify-content: space-between; width: 8px; background: #f3f2ec; }
.vs button, .hs button { width: 7px; height: 8px; background: #c3d5fb; border-radius: 1px; }
.vs svg, .hs svg { width: 7px; height: 8px; }
.vs i, .hs i { width: 7px; height: 7px; background: #bcd0fa; border-radius: 1px; }
.vbar { display: flex; align-items: center; gap: 1px; height: 8px; background: #ece9d8; }
.vbar svg { flex: none; width: 9px; height: 8px; }
.vbar .hs svg { width: 7px; }
.scale { flex: none; width: 35px; padding-left: 9px; white-space: nowrap; }
.hs { flex: 1; display: flex; align-items: center; justify-content: space-between; height: 8px; background: #f8f7f2; }
.grip { width: 7px; height: 6px; background: radial-gradient(circle, #c4c1ae 1px, transparent 1px) 0 0 / 3px 3px; }

.status { display: flex; align-items: center; height: 12px; padding: 0 29px 0 1px; background: linear-gradient(#e2e2e2, #c6c6c6); border-top: 1px solid #aaa; }
.msg { flex: 1; min-width: 0; white-space: nowrap; }
.status label { display: flex; align-items: center; gap: 1px; }
.status input { appearance: none; width: 7px; height: 7px; background: #fff; border: 1px solid #456; }
.status input:checked::before { content: ""; display: block; width: 2px; height: 4px; margin-left: 1px; border: solid #2a9a2a; border-width: 0 1px 1px 0; transform: rotate(40deg); }
.status svg { width: 8px; height: 8px; margin: 0 1px 0 2px; }
```
